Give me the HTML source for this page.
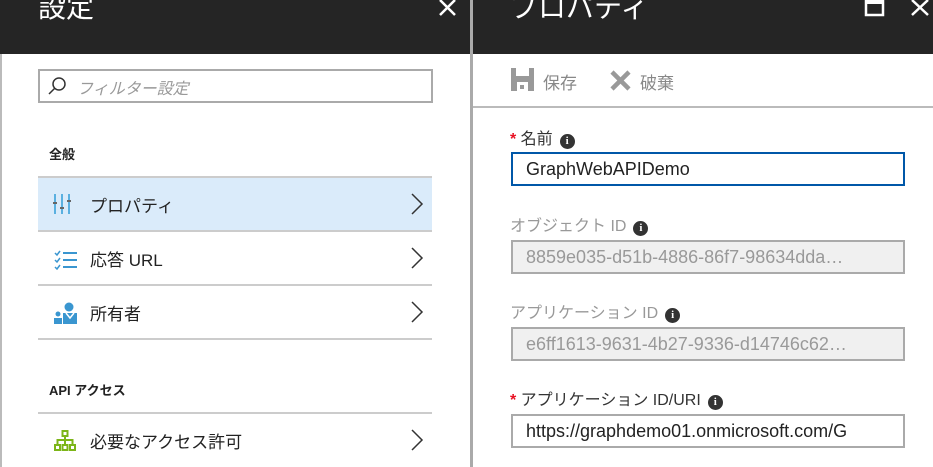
<!DOCTYPE html>
<html><head><meta charset="utf-8"><style>
*{margin:0;padding:0;box-sizing:border-box}
body{width:933px;height:467px;overflow:hidden;background:#fff;position:relative;font-family:"Liberation Sans","Noto Sans CJK JP",sans-serif;color:#333}
.a{position:absolute}
.hdr{background:#252525;top:0;height:54px}
.t{color:#fff;font-size:28px;top:-10px;line-height:36px}
.row{left:38px;width:394px;height:54px;border-top:2px solid #ccc;}
.row .lbl{position:absolute;left:52px;top:14px;font-size:17px;color:#222}
.row .chev{position:absolute;right:8px;top:14px}
.sec{font-size:13px;font-weight:bold;color:#222;left:49px}
.lab{font-size:16px;color:#333;left:510px}
.lab.dis{color:#999}
.inp{left:511px;width:394px;height:34px;border:2px solid #aaa;font-size:18px;padding:5px 0 0 13px;color:#222;white-space:nowrap;overflow:hidden}
.info{display:inline-block;width:15px;height:15px;border-radius:50%;background:#333;color:#fff;font-size:11px;font-weight:bold;text-align:center;line-height:15px;vertical-align:0px;margin-left:7px;font-family:"Liberation Serif",serif}
.star{color:#e81123;font-weight:bold}
</style></head><body>
<div class="a" style="left:0;top:0;width:2px;height:467px;background:#bbb"></div>
<div class="a hdr" style="left:0;width:470px"></div>
<div class="a t" style="left:38px">設定</div>
<svg class="a" style="left:438px;top:0" width="20" height="18"><path d="M2 0L17 15M17 0L2 15" stroke="#fff" stroke-width="2.5"/></svg>
<div class="a" style="left:470px;top:0;width:3px;height:467px;background:#aaa"></div>
<div class="a hdr" style="left:473px;width:460px"></div>
<div class="a t" style="left:510px">プロパティ</div>
<svg class="a" style="left:864px;top:0" width="22" height="18"><rect x="2" y="-4" width="17" height="19" fill="none" stroke="#fff" stroke-width="2.5"/><rect x="2" y="-4" width="17" height="8" fill="#fff"/></svg>
<svg class="a" style="left:910px;top:0" width="22" height="18"><path d="M2 0L18 15M18 0L2 15" stroke="#fff" stroke-width="2.5"/></svg>

<div class="a" style="left:38px;top:69px;width:395px;height:34px;border:2px solid #aaa"></div>
<svg class="a" style="left:47px;top:76px" width="20" height="20"><circle cx="12" cy="8" r="6" fill="none" stroke="#333" stroke-width="1.5"/><path d="M8 12L2 18" stroke="#333" stroke-width="1.5"/></svg>
<div class="a" style="left:77px;top:75px;font-size:16px;color:#999;font-style:italic">フィルター設定</div>
<div class="a sec" style="top:144px">全般</div>

<div class="a row" style="top:176px;background:#daebfa"><svg class="lbl" style="left:14px;top:16px" width="22" height="22"><g stroke="#5ab0e0" stroke-width="2"><path d="M3 0V20M10 0V20M17 0V20"/></g><g fill="#666"><rect x="1" y="8" width="4" height="2"/><rect x="8" y="13" width="4" height="2"/><rect x="15" y="6" width="4" height="2"/></g></svg><span class="lbl">プロパティ</span><svg class="chev" width="14" height="24"><path d="M2 2L12 12L2 22" fill="none" stroke="#333" stroke-width="1.5"/></svg></div>
<div class="a" style="left:38px;top:230px;width:394px;height:2px;background:#ccc"></div>
<div class="a row" style="top:230px"><svg class="lbl" style="left:16px;top:18px" width="24" height="20"><g stroke="#3a96d0" stroke-width="1.5" fill="none"><path d="M1 3L3 5L6 1M1 10L3 12L6 8M1 17L3 19L6 15"/><path d="M9 3H23M9 10H23M9 17H23" stroke-width="2"/></g></svg><span class="lbl">応答 URL</span><svg class="chev" width="14" height="24"><path d="M2 2L12 12L2 22" fill="none" stroke="#333" stroke-width="1.5"/></svg></div>
<div class="a row" style="top:284px"><svg class="lbl" style="left:16px;top:16px" width="24" height="22"><g fill="#3a96d0"><circle cx="15" cy="5" r="4.5"/><path d="M9 11H23V22H9Z"/><circle cx="4" cy="12" r="2.5"/><path d="M0 16H8V22H0Z"/></g><path d="M12 11L16 16L20 11" fill="none" stroke="#fff" stroke-width="1.5"/></svg><span class="lbl">所有者</span><svg class="chev" width="14" height="24"><path d="M2 2L12 12L2 22" fill="none" stroke="#333" stroke-width="1.5"/></svg></div>
<div class="a" style="left:38px;top:338px;width:394px;height:2px;background:#ccc"></div>
<div class="a sec" style="top:380px">API アクセス</div>
<div class="a row" style="top:412px"><svg class="lbl" style="left:16px;top:16px" width="24" height="24"><g fill="none" stroke="#7cb518" stroke-width="2"><rect x="8.5" y="1" width="5" height="5"/><rect x="1" y="15" width="5" height="5"/><rect x="8.5" y="15" width="5" height="5"/><rect x="16" y="15" width="5" height="5"/><path d="M11 6V15M3.5 15V10H18.5V15"/></g></svg><span class="lbl">必要なアクセス許可</span><svg class="chev" width="14" height="24"><path d="M2 2L12 12L2 22" fill="none" stroke="#333" stroke-width="1.5"/></svg></div>

<svg class="a" style="left:511px;top:68px" width="24" height="24"><path d="M0 0H23V23H0Z M5 0V8H18V0Z M6 14V23H17V14Z" fill="#999" fill-rule="evenodd"/><rect x="9" y="17" width="4" height="4" fill="#999"/></svg>
<div class="a" style="left:543px;top:69px;font-size:17px;color:#888">保存</div>
<svg class="a" style="left:610px;top:70px" width="22" height="22"><path d="M2 2L19 19M19 2L2 19" stroke="#999" stroke-width="4.5"/></svg>
<div class="a" style="left:640px;top:69px;font-size:17px;color:#888">破棄</div>
<div class="a" style="left:473px;top:106px;width:460px;height:2px;background:#bbb"></div>

<div class="a lab" style="top:125px"><span class="star">*</span> 名前<span class="info">i</span></div>
<div class="a inp" style="top:152px;border-color:#0057a8">GraphWebAPIDemo</div>
<div class="a lab dis" style="top:212px">オブジェクト ID<span class="info">i</span></div>
<div class="a inp" style="top:240px;background:#f0f0f0;color:#999">8859e035-d51b-4886-86f7-98634dda…</div>
<div class="a lab dis" style="top:299px">アプリケーション ID<span class="info">i</span></div>
<div class="a inp" style="top:327px;background:#f0f0f0;color:#999">e6ff1613-9631-4b27-9336-d14746c62…</div>
<div class="a lab" style="top:386px"><span class="star">*</span> アプリケーション ID/URI<span class="info">i</span></div>
<div class="a inp" style="top:414px">https://graphdemo01.onmicrosoft.com/G</div>
</body></html>
